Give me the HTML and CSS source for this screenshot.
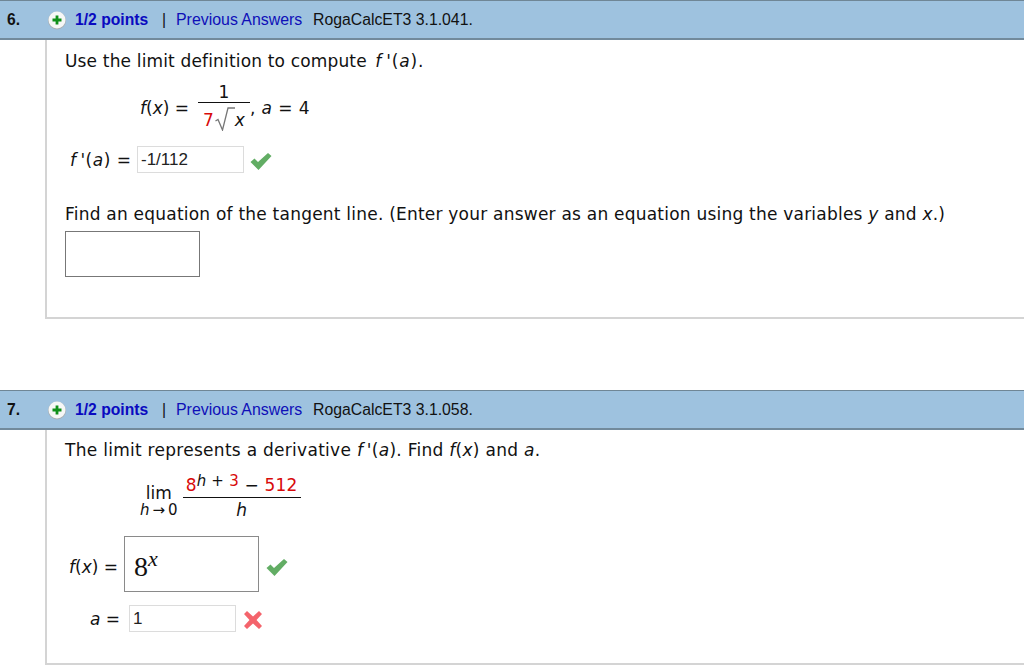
FILE: index.html
```html
<!DOCTYPE html>
<html lang="en">
<head>
<meta charset="utf-8">
<title>Questions</title>
<link rel="stylesheet" href="styles.css">
</head>
<body>
<section class="question q6">
  <header class="qhead">
    <span class="qnum">6.</span>
    <span class="plus"><svg width="20" height="20" viewBox="0 0 20 20"><circle cx="10" cy="10.500" r="9" fill="#a9afb3"/><circle cx="10" cy="10" r="8.500" fill="#f6f7f6"/><path d="M10 5.500v9M5.500 10h9" stroke="#11901a" stroke-width="2.800"/></svg></span>
    <span class="points">1/2 points</span>
    <span class="sep">|</span>
    <span class="prev">Previous Answers</span>
    <span class="code">RogaCalcET3 3.1.041.</span>
  </header>
  <div class="qbody">
    <p class="line l6a">Use the limit definition to compute <span class="gap"><i>f&thinsp;'</i>(<i>a</i>).</span></p>
    <div class="formula f6">
      <span class="eq"><i>f</i>(<i>x</i>) =</span>
      <span class="frac frac6">
        <span class="num">1</span>
        <span class="den"><span class="red">7</span><svg class="root" width="20" height="24" viewBox="0 0 20 24"><path d="M0.5 14l2.500-1.500 4.500 10.500L13 1h7" fill="none" stroke="#777" stroke-width="1.300"/></svg><i>x</i></span>
      </span>
      <span class="after">, <i>a</i> = 4</span>
    </div>
    <div class="answer a6">
      <span class="lbl"><i>f&thinsp;'</i>(<i>a</i>) =</span>
      <span class="field">-1/112</span>
      <svg class="mark low" width="22" height="19" viewBox="0 0 22 19"><path d="M0.500 10l4-3.500 3.500 3.500L18 1l3.500 3L8.500 18z" fill="#62ad64"/></svg>
    </div>
    <p class="line l6b">Find an equation of the tangent line. (Enter your answer as an equation using the variables <i>y</i> and <i>x</i>.)</p>
    <div class="bigbox box6"></div>
  </div>
</section>
<section class="question q7">
  <header class="qhead">
    <span class="qnum">7.</span>
    <span class="plus"><svg width="20" height="20" viewBox="0 0 20 20"><circle cx="10" cy="10.500" r="9" fill="#a9afb3"/><circle cx="10" cy="10" r="8.500" fill="#f6f7f6"/><path d="M10 5.500v9M5.500 10h9" stroke="#11901a" stroke-width="2.800"/></svg></span>
    <span class="points">1/2 points</span>
    <span class="sep">|</span>
    <span class="prev">Previous Answers</span>
    <span class="code">RogaCalcET3 3.1.058.</span>
  </header>
  <div class="qbody">
    <p class="line l7a">The limit represents a derivative <i>f&thinsp;'</i>(<i>a</i>). Find <i>f</i>(<i>x</i>) and <i>a</i>.</p>
    <div class="formula f7">
      <span class="lim"><span class="limw">lim</span><span class="limsub"><i>h</i>&#8201;&#8594;&#8201;0</span></span>
      <span class="frac frac7">
        <span class="num"><span class="red">8</span><sup><i>h</i> + <span class="red">3</span></sup> &minus; <span class="red">512</span></span>
        <span class="den"><i>h</i></span>
      </span>
    </div>
    <div class="answer a7x">
      <span class="lbl low"><i>f</i>(<i>x</i>) =</span>
      <span class="bigbox box7"><span class="serif">8<sup><i>x</i></sup></span></span>
      <svg class="mark low" width="22" height="19" viewBox="0 0 22 19"><path d="M0.500 10l4-3.500 3.500 3.500L18 1l3.500 3L8.500 18z" fill="#62ad64"/></svg>
    </div>
    <div class="answer a7a">
      <span class="lbl"><i>a</i> =</span>
      <span class="field">1</span>
      <svg class="mark low" width="20" height="20" viewBox="0 0 20 20"><path d="M4 1l6 5.500L16 1l3 3-5.500 6 5.500 6-3 3-6-5.500L4 19l-3-3 5.500-6L1 4z" fill="#f4646c"/></svg>
    </div>
  </div>
</section>
</body>
</html>
```
FILE: styles.css
```css
html, body { margin: 0; padding: 0; background: #fff; }
body { width: 1024px; height: 666px; overflow: hidden; font-family: "DejaVu Sans", sans-serif; font-size: 17px; color: #111; }
p { margin: 0; }
.question { display: flex; flex-direction: column; }
.qhead {
  display: flex; align-items: center; height: 37px; background: #9ec2df;
  border-top: 1px solid #6f8696; border-bottom: 2px solid #728a9c;
  font-family: "Liberation Sans", sans-serif; font-size: 15.7px; color: #111;
}
.qnum { width: 47px; padding-left: 7px; box-sizing: border-box; font-weight: 700; }
.plus { width: 28px; height: 20px; box-sizing: border-box; }
.points { width: 87px; font-weight: 700; color: #0a0ac0; }
.sep { width: 14px; }
.prev { width: 137px; color: #0f0fb8; font-size: 15.9px; }
.code { font-size: 15.8px; }
.qbody { margin-left: 45px; border-left: 2px solid #d4d4d4; border-bottom: 2px solid #d4d4d4; padding-left: 18px; }
.q6 .qbody { height: 277px; }
.q7 { margin-top: 71px; }
.q7 .qbody { height: 233px; }
.line { line-height: 20px; white-space: nowrap; letter-spacing: 0.22px; }
.l6a { padding-top: 11px; letter-spacing: 0.16px; }
.gap { margin-left: 3px; letter-spacing: 0.8px; }
.formula { display: flex; align-items: center; }
.f6 { margin-top: 11px; padding-left: 75px; }
.frac { display: flex; flex-direction: column; align-items: center; }
.frac6 { width: 52px; margin-left: 9px; }
.num { display: block; line-height: 20px; border-bottom: 1px solid #111; width: 100%; text-align: center; white-space: nowrap; }
.den { display: flex; align-items: flex-end; justify-content: center; line-height: 26px; height: 30px; }
.root { margin-left: 1px; margin-bottom: 2px; }
.red { color: #d80a0a; }
.after { letter-spacing: 0.4px; }
.answer { display: flex; align-items: center; }
.a6 { margin-top: 13px; }
.lbl { white-space: nowrap; }
.a6 .lbl { padding-left: 5px; width: 72px; box-sizing: border-box; letter-spacing: 0.5px; }
.field { display: block; width: 107px; height: 27px; box-sizing: border-box; border: 1px solid #dcdcdc; font-family: "Liberation Sans", sans-serif; font-size: 17px; line-height: 25px; padding-left: 3px; color: #222; }
.mark { margin-left: 6px; filter: blur(0.4px); }
.low { margin-top: 6px; }
.a6 .low { margin-top: 4px; }
.a7a .low { margin-top: 3px; }
.l6b { margin-top: 31px; }
.bigbox { display: block; box-sizing: border-box; border: 1px solid #777; }
.box6 { width: 135px; height: 46px; margin-top: 7px; }
.l7a { padding-top: 10px; letter-spacing: 0.28px; }
.f7 { margin-top: 13px; padding-left: 75px; }
.lim { display: flex; flex-direction: column; align-items: center; margin-top: 5px; }
.limw { line-height: 20px; font-size: 17px; }
.limsub { font-size: 15px; line-height: 13px; white-space: nowrap; padding-top: 1px; }
.frac7 { width: 118px; margin-left: 5px; }
.frac7 .num { line-height: 24px; letter-spacing: 0.2px; }
.frac7 .den { height: 24px; line-height: 24px; }
.num sup { font-size: 15px; line-height: 0; vertical-align: 5px; }
.a7x { margin-top: 14px; }
.a7x .lbl { padding-left: 4px; width: 59px; box-sizing: border-box; }
.a7x .mark { margin-left: 7px; }
.a7a .mark { margin-left: 7px; }
.box7 { width: 135px; height: 56px; border: 1.5px solid #8a8a8a; padding: 14px 9px 0; }
.serif { font-family: "Liberation Serif", serif; font-size: 28px; line-height: 32px; }
.serif sup { font-size: 22px; line-height: 0; }
.a7a { margin-top: 13px; }
.a7a .lbl { padding-left: 25px; width: 64px; box-sizing: border-box; }
```
